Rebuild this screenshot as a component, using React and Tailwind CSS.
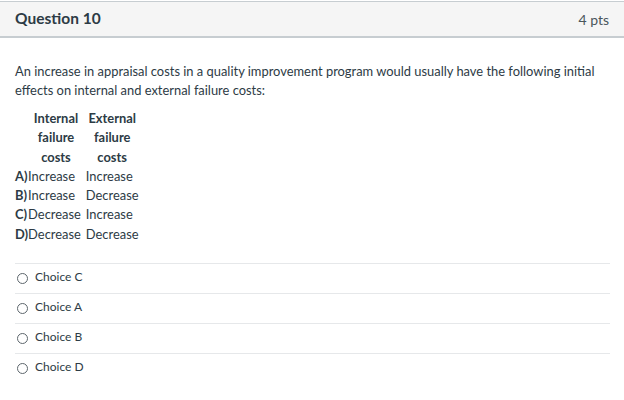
import React from 'react';

const rows = [
  ['A)', 'Increase', 'Increase'],
  ['B)', 'Increase', 'Decrease'],
  ['C)', 'Decrease', 'Increase'],
  ['D)', 'Decrease', 'Decrease'],
];

const choices = ['Choice C', 'Choice A', 'Choice B', 'Choice D'];

export default function App() {
  return (
    <div className="w-[624px] h-[400px] bg-white text-[#2d3b45] font-['Lato','Liberation_Sans',sans-serif] pt-px">
      {/* header */}
      <div className="h-[37px] bg-[#f5f5f5] border-t border-b-2 border-[#c7cdd1] flex items-center justify-between px-[15px]">
        <h2 className="text-[15.5px] font-bold">Question 10</h2>
        <span className="text-[14px] text-[#4a555c]">4 pts</span>
      </div>

      <div className="px-[15px] pt-[24px]">
        <p className="text-[12.9px] leading-[19px]">
          An increase in appraisal costs in a quality improvement program would usually have the following initial effects on internal and external failure costs:
        </p>

        <table className="mt-[9px] text-[12.9px] leading-[19.3px] border-collapse">
          <thead className="font-bold">
            <tr>
              <th></th>
              <th className="text-center px-[2px]">Internal</th>
              <th className="text-center px-[3px]">External</th>
            </tr>
            <tr>
              <th></th>
              <th className="text-center px-[2px]">failure</th>
              <th className="text-center px-[3px]">failure</th>
            </tr>
            <tr>
              <th></th>
              <th className="text-center px-[2px]">costs</th>
              <th className="text-center px-[3px]">costs</th>
            </tr>
          </thead>
          <tbody>
            {rows.map(([l, a, b]) => (
              <tr key={l}>
                <td className="font-bold">{l}</td>
                <td className="pr-[3px]">{a}</td>
                <td className="px-[2px]">{b}</td>
              </tr>
            ))}
          </tbody>
        </table>

        <div className="mt-[19px] w-[595px]">
          {choices.map((c) => (
            <div key={c} className="border-t border-[#e6e8ea] h-[30px] flex items-center pl-[2px] pb-[3px]">
              <span className="w-[11px] h-[11px] rounded-full border border-[#5d666c] mr-[7px] mt-[2px]"></span>
              <span className="text-[12px]">{c}</span>
            </div>
          ))}
        </div>
      </div>
    </div>
  );
}
